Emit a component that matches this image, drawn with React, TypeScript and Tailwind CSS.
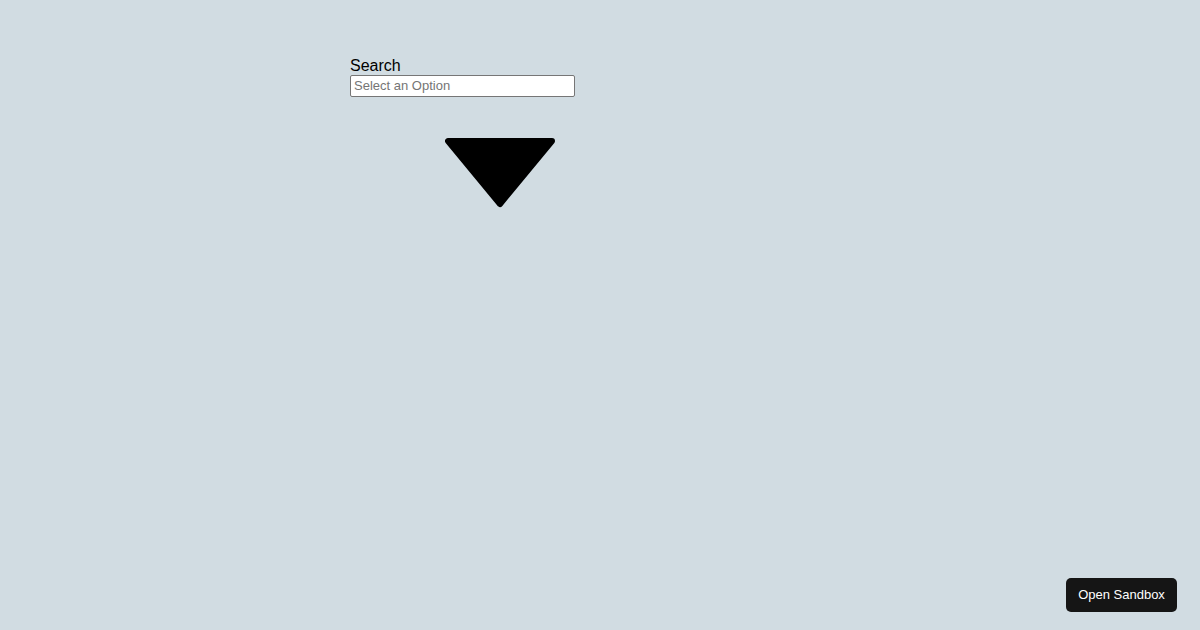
import React from "react";

export default function App() {
  return (
    <div className="relative w-[1200px] h-[630px] bg-[#d1dce2] overflow-hidden" style={{ fontFamily: '"Liberation Sans", Arial, sans-serif' }}>
      <div className="pl-[350px] pt-[56px] flex flex-col items-start">
        <label className="text-[16px] leading-[19px] text-black">Search</label>
        <input
          placeholder="Select an Option"
          className="w-[225px] h-[22px] border border-[#767676] rounded-[2px] bg-white px-[3px] pb-[2px] text-[13px] text-black placeholder:text-[#757575] outline-none"
        />
        <svg width="110" height="70" viewBox="0 0 110 70" className="ml-[95px] mt-[41px]">
          <polygon points="3,3 107,3 55,66" fill="#000" stroke="#000" strokeWidth="6" strokeLinejoin="round" />
        </svg>
      </div>
      <button className="absolute right-[23px] bottom-[18px] w-[111px] h-[34px] rounded-[5px] bg-[#151515] text-white text-[13px]">
        Open Sandbox
      </button>
    </div>
  );
}
